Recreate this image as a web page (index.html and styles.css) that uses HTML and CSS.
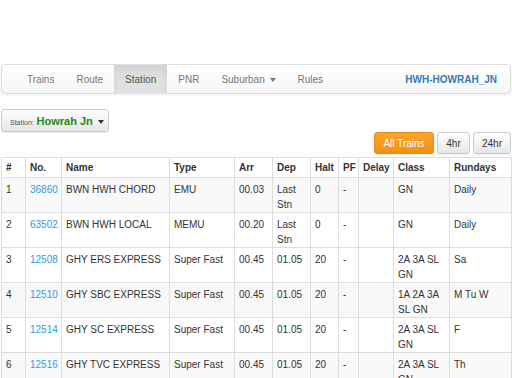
FILE: index.html
```html
<!DOCTYPE html>
<html lang="en">
<head>
  <meta charset="UTF-8">
  <title>HWH-HOWRAH_JN</title>
  <link rel="stylesheet" href="styles.css">
</head>
<body>
  <div class="page">
    <nav class="navbar">
      <ul class="nav">
        <li><a href="#">Trains</a></li>
        <li><a href="#">Route</a></li>
        <li class="active"><a href="#">Station</a></li>
        <li><a href="#">PNR</a></li>
        <li><a href="#">Suburban <span class="caret"></span></a></li>
        <li><a href="#">Rules</a></li>
      </ul>
      <a class="brand" href="#">HWH-HOWRAH_JN</a>
    </nav>

    <div class="station-row">
      <button class="btn station-btn"><small>Station:</small> <b>Howrah Jn</b> <span class="caret dark"></span></button>
    </div>

    <div class="filters">
      <button class="btn btn-warning">All Trains</button>
      <button class="btn">4hr</button>
      <button class="btn">24hr</button>
    </div>

    <table class="trains">
      <colgroup>
        <col style="width:24px">
        <col style="width:36px">
        <col style="width:108px">
        <col style="width:65px">
        <col style="width:38px">
        <col style="width:38px">
        <col style="width:28px">
        <col style="width:20px">
        <col style="width:35px">
        <col style="width:56px">
        <col style="width:62px">
      </colgroup>
      <thead>
        <tr>
          <th>#</th><th>No.</th><th>Name</th><th>Type</th><th>Arr</th><th>Dep</th>
          <th>Halt</th><th>PF</th><th>Delay</th><th>Class</th><th>Rundays</th>
        </tr>
      </thead>
      <tbody>
        <tr class="alt">
          <td>1</td><td><a href="#">36860</a></td><td>BWN HWH CHORD</td><td>EMU</td><td>00.03</td>
          <td>Last Stn</td><td>0</td><td>-</td><td></td><td>GN</td><td>Daily</td>
        </tr>
        <tr>
          <td>2</td><td><a href="#">63502</a></td><td>BWN HWH LOCAL</td><td>MEMU</td><td>00.20</td>
          <td>Last Stn</td><td>0</td><td>-</td><td></td><td>GN</td><td>Daily</td>
        </tr>
        <tr>
          <td>3</td><td><a href="#">12508</a></td><td>GHY ERS EXPRESS</td><td>Super Fast</td><td>00.45</td>
          <td>01.05</td><td>20</td><td>-</td><td></td><td>2A 3A SL GN</td><td>Sa</td>
        </tr>
        <tr class="alt">
          <td>4</td><td><a href="#">12510</a></td><td>GHY SBC EXPRESS</td><td>Super Fast</td><td>00.45</td>
          <td>01.05</td><td>20</td><td>-</td><td></td><td>1A 2A 3A SL GN</td><td>M Tu W</td>
        </tr>
        <tr>
          <td>5</td><td><a href="#">12514</a></td><td>GHY SC EXPRESS</td><td>Super Fast</td><td>00.45</td>
          <td>01.05</td><td>20</td><td>-</td><td></td><td>2A 3A SL GN</td><td>F</td>
        </tr>
        <tr class="alt">
          <td>6</td><td><a href="#">12516</a></td><td>GHY TVC EXPRESS</td><td>Super Fast</td><td>00.45</td>
          <td>01.05</td><td>20</td><td>-</td><td></td><td>2A 3A SL GN</td><td>Th</td>
        </tr>
      </tbody>
    </table>
  </div>
</body>
</html>
```

FILE: styles.css
```css
body {
  margin: 0;
  font-family: 'Liberation Sans', Arial, sans-serif;
  font-size: 10px;
  line-height: 15px;
  color: #333;
  background: #fff;
}
a {
  color: #3399dd;
  text-decoration: none;
}
.page {
  padding: 64px 1px 0 1px;
}
.navbar {
  display: flex;
  align-items: center;
  justify-content: space-between;
  height: 28px;
  border: 1px solid #ddd;
  border-radius: 4px;
  background: linear-gradient(to bottom, #fff 0%, #f6f6f6 100%);
  box-shadow: 0 1px 4px rgba(0, 0, 0, 0.06);
}
.nav {
  display: flex;
  list-style: none;
  margin: 0;
  padding: 0 0 0 14px;
  height: 28px;
}
.nav li a {
  display: block;
  padding: 0 11px;
  line-height: 29px;
  color: #777;
}
.nav li.active a {
  color: #555;
  background: linear-gradient(to bottom, #dbdbdb 0%, #e4e4e4 100%);
  box-shadow: inset 0 3px 9px rgba(0, 0, 0, 0.06);
}
.caret {
  display: inline-block;
  width: 0;
  height: 0;
  margin-left: 2px;
  vertical-align: middle;
  border-top: 4px solid #777;
  border-left: 3.5px solid transparent;
  border-right: 3.5px solid transparent;
}
.caret.dark {
  border-top-color: #333;
}
.brand {
  font-weight: bold;
  color: #337ab7;
  margin-right: 13px;
}
.station-row {
  padding-top: 15px;
}
.btn {
  font-family: inherit;
  font-size: 10px;
  color: #333;
  height: 22px;
  padding: 0 9px;
  border: 1px solid #ccc;
  border-radius: 3px;
  background: linear-gradient(to bottom, #fff 0%, #e6e6e6 100%);
  box-shadow: 0 1px 1px rgba(0, 0, 0, 0.08);
  cursor: pointer;
  white-space: nowrap;
}
.station-btn {
  height: 23px;
  width: 108px;
  padding: 0 0 0 8px;
  text-align: left;
}
.station-btn small {
  font-size: 7px;
  color: #555;
}
.station-btn b {
  font-size: 11px;
  color: #1a8a1a;
}
.filters {
  display: flex;
  justify-content: flex-end;
  gap: 3px;
  margin-bottom: 3px;
}
.filters .btn:last-child {
  width: 38px;
  padding: 0;
}
.filters .btn:nth-child(2) {
  width: 33px;
  padding: 0;
}
.btn-warning {
  color: #fff;
  width: 60px;
  border-color: #e38d13;
  background: linear-gradient(to bottom, #f8a530 0%, #f0920f 100%);
  padding: 0;
}
.trains {
  width: 510px;
  table-layout: fixed;
  border-collapse: collapse;
  border: 1px solid #ddd;
}
.trains th,
.trains td {
  border: 1px solid #ddd;
  padding: 4px 4px 0;
  text-align: left;
  vertical-align: top;
  line-height: 15px;
}
.trains th {
  font-weight: bold;
  padding: 2px 4px;
}
.trains tbody tr {
  height: 35px;
}
.trains tbody tr.alt {
  background: #f9f9f9;
}
```
